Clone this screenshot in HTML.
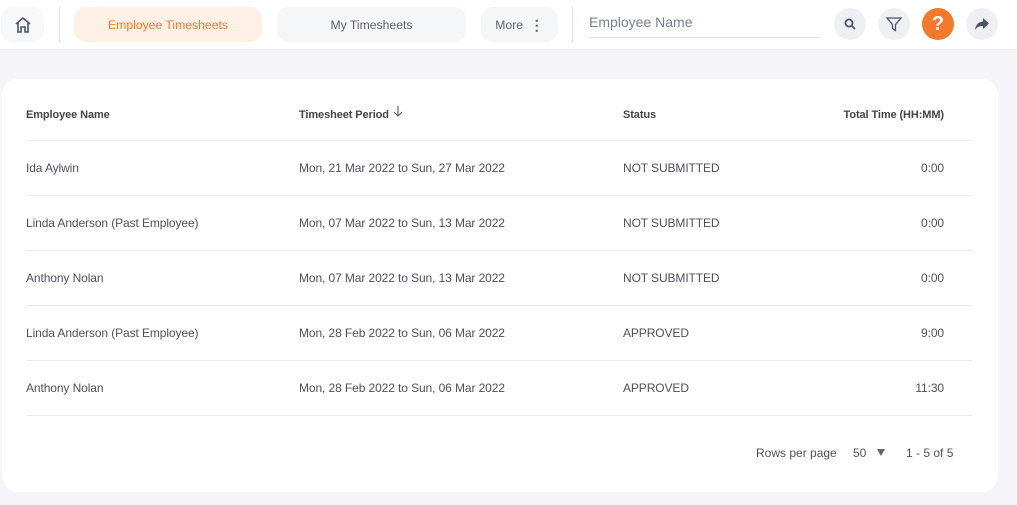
<!DOCTYPE html>
<html><head><meta charset="utf-8"><style>
*{box-sizing:border-box;margin:0;padding:0}
body{width:1017px;height:505px;background:#f4f4f9;font-family:"Liberation Sans",Arial,sans-serif;color:#4a4a55;position:relative;overflow:hidden}
.top{position:absolute;left:0;top:0;width:1017px;height:50px;background:#fff;border-bottom:1px solid #ebebf0}
.pill{position:absolute;top:7px;height:35px;border-radius:12px;background:#f5f6f8;font-size:12.2px;color:#5a6070;display:flex;align-items:center;justify-content:center}
.sep{position:absolute;top:7px;width:1px;height:35px;background:#e4e4ea}
.circ{position:absolute;top:8px;width:32px;height:32px;border-radius:50%;background:#eef0f3;display:flex;align-items:center;justify-content:center}
.card{position:absolute;left:2px;top:79px;width:996px;height:413px;background:#fff;border-radius:16px}
.row{position:absolute;left:24px;width:946px;height:55px;border-bottom:1px solid #ebebef;font-size:12px;color:#50505c;letter-spacing:-0.1px}
.row span{position:absolute;top:20px}
.h span{font-weight:bold;font-size:11px;color:#444;top:23px}
</style></head><body>
<div class="top">
 <div class="pill" style="left:1px;width:43px;background:#f7f8fa"><svg width="20" height="20" viewBox="0 0 20 20" fill="none" stroke="#4a5568" stroke-width="1.6"><path d="M3 9 L10 3 L17 9 M5 8 V17 H8 V12 H12 V17 H15 V8"/></svg></div>
 <div class="sep" style="left:59px"></div>
 <div class="pill" style="left:74px;width:188px;background:#fff0e6;color:#f5792a">Employee Timesheets</div>
 <div class="pill" style="left:277px;width:189px">My Timesheets</div>
 <div class="pill" style="left:481px;width:77px">More&nbsp;&nbsp;<b style="font-size:14px;line-height:1">&#8942;</b></div>
 <div class="sep" style="left:572px"></div>
 <div style="position:absolute;left:589px;top:14px;font-size:14px;color:#7a7f8c">Employee Name</div>
 <div style="position:absolute;left:589px;top:37px;width:232px;height:1px;background:#e2e3e8"></div>
 <div class="circ" style="left:834px"><svg width="14" height="14" viewBox="0 0 14 14" fill="none" stroke="#4a5568" stroke-width="1.8"><circle cx="6" cy="6" r="3.6"/><path d="M8.7 8.7 L12 12"/></svg></div>
 <div class="circ" style="left:878px"><svg width="18" height="18" viewBox="0 0 18 18" fill="none" stroke="#4a5568" stroke-width="1.3"><path d="M2 3 H16 L10.5 9.5 V15.5 L7.5 13.5 V9.5 Z"/></svg></div>
 <div class="circ" style="left:922px;background:#f5792a;color:#fff;font-weight:bold;font-size:20px">?</div>
 <div class="circ" style="left:966px"><svg width="18" height="18" viewBox="0 0 18 18"><path d="M10 3 L16 8.5 L10 14 V11 C6 11 4 12 2 15 C2.5 10 5 7 10 6.5 Z" fill="#4a5568"/></svg></div>
</div>
<div class="card">
 <div class="row h" style="top:7px"><span style="left:0">Employee Name</span><span style="left:273px">Timesheet Period</span><svg style="position:absolute;left:367px;top:19px" width="10" height="12" viewBox="0 0 10 12" fill="none" stroke="#666" stroke-width="1.2"><path d="M5 1 V11 M1 7 L5 11 L9 7"/></svg><span style="left:597px">Status</span><span style="right:28px">Total Time (HH:MM)</span></div>
 <div class="row" style="top:62px"><span style="left:0">Ida Aylwin</span><span style="left:273px">Mon, 21 Mar 2022 to Sun, 27 Mar 2022</span><span style="left:597px">NOT SUBMITTED</span><span style="right:28px">0:00</span></div>
 <div class="row" style="top:117px"><span style="left:0">Linda Anderson (Past Employee)</span><span style="left:273px">Mon, 07 Mar 2022 to Sun, 13 Mar 2022</span><span style="left:597px">NOT SUBMITTED</span><span style="right:28px">0:00</span></div>
 <div class="row" style="top:172px"><span style="left:0">Anthony Nolan</span><span style="left:273px">Mon, 07 Mar 2022 to Sun, 13 Mar 2022</span><span style="left:597px">NOT SUBMITTED</span><span style="right:28px">0:00</span></div>
 <div class="row" style="top:227px"><span style="left:0">Linda Anderson (Past Employee)</span><span style="left:273px">Mon, 28 Feb 2022 to Sun, 06 Mar 2022</span><span style="left:597px">APPROVED</span><span style="right:28px">9:00</span></div>
 <div class="row" style="top:282px"><span style="left:0">Anthony Nolan</span><span style="left:273px">Mon, 28 Feb 2022 to Sun, 06 Mar 2022</span><span style="left:597px">APPROVED</span><span style="right:28px">11:30</span></div>
 <div style="position:absolute;top:367px;left:754px;font-size:12px;color:#50505c">Rows per page</div>
 <div style="position:absolute;top:367px;left:851px;font-size:12px;color:#50505c">50</div>
 <svg style="position:absolute;left:875px;top:369px" width="8" height="8" viewBox="0 0 8 8"><path d="M0 1 H8 L4 8 Z" fill="#666"/></svg>
 <div style="position:absolute;top:367px;left:904px;font-size:12px;color:#50505c">1 - 5 of 5</div>
</div>
</body></html>
